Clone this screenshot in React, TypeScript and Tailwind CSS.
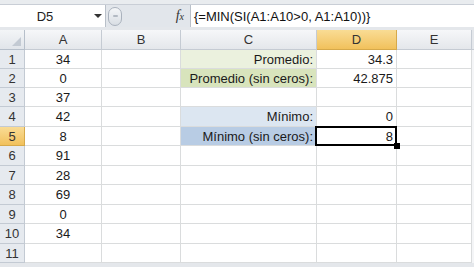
import React from "react";

const rowHeights = ["h-[19px]", "h-[19px]", "h-[19px]", "h-[20px]", "h-[19px]", "h-[20px]", "h-[19px]", "h-[20px]", "h-[19px]", "h-[20px]", "h-[19px]"];
const colA = ["34", "0", "37", "42", "8", "91", "28", "69", "0", "34", ""];

type CCell = { text: string; bg: string };
const colC: Record<number, CCell> = {
  0: { text: "Promedio:", bg: "bg-[#ebf1de]" },
  1: { text: "Promedio (sin ceros):", bg: "bg-[#d8e4bc]" },
  3: { text: "Mínimo:", bg: "bg-[#dce6f1]" },
  4: { text: "Mínimo (sin ceros):", bg: "bg-[#b8cce4]" },
};
const colD: Record<number, string> = { 0: "34.3", 1: "42.875", 3: "0", 4: "8" };

const cell = "border-r border-b border-[#dadcdd] flex items-center px-[3px] text-[#1a1a1a]";

export default function App() {
  return (
    <div
      className="w-[474px] h-[267px] overflow-hidden bg-[#e4e7eb] text-[13px] leading-none"
      style={{ fontFamily: '"Liberation Sans", Arial, sans-serif' }}
    >
      {/* ribbon edge */}
      <div className="h-[5px] bg-[#e9ecef] border-b border-[#c9ced6]" />

      {/* formula bar */}
      <div className="h-[22px] flex bg-[#e2e6eb]">
        <div className="w-[106px] bg-white border-r border-[#b9c0c9] flex items-center relative">
          <span className="w-[90px] text-center text-[#222]">D5</span>
          <span className="absolute right-[3px] top-[9px] w-0 h-0 border-l-[4px] border-r-[4px] border-t-[4px] border-l-transparent border-r-transparent border-t-[#333]" />
        </div>
        <div className="w-[84px] flex items-center pl-[2px]">
          <div className="w-[14px] h-[19px] rounded-full border border-[#aab2bd] bg-gradient-to-b from-[#f4f6f8] to-[#d9dee4] flex items-center justify-center">
            <span className="w-[5px] h-[2px] bg-[#b3bac3] rounded" />
          </div>
          <span
            className="ml-auto mr-[6px] italic text-[14px] text-[#333]"
            style={{ fontFamily: '"Liberation Serif", serif' }}
          >
            f<span className="text-[10px]">x</span>
          </span>
        </div>
        <div className="flex-1 bg-white border-l border-[#b9c0c9] flex items-center pl-[3px] text-[#111]">
          {"{=MIN(SI(A1:A10>0, A1:A10))}"}
        </div>
      </div>

      <div className="h-[3px]" />

      {/* sheet */}
      <div className="grid grid-cols-[25px_77px_79px_136px_80px_75px_1fr]">
        {/* header row */}
        <div className="h-[20px] bg-gradient-to-b from-[#f3f5f7] to-[#e1e5ea] border-r border-b border-[#b6bfca] flex items-end justify-end p-[3px]">
          <svg width="9" height="9" viewBox="0 0 9 9">
            <path d="M9 0 L9 9 L0 9 Z" fill="#c3cad3" />
          </svg>
        </div>
        {["A", "B", "C"].map((c) => (
          <div key={c} className="h-[20px] bg-gradient-to-b from-[#f6f7f9] to-[#e4e7eb] border-r border-b border-[#c5cbd3] flex items-center justify-center text-[#333]">
            {c}
          </div>
        ))}
        <div className="h-[20px] bg-gradient-to-b from-[#f9dc94] to-[#f1c15b] border-r border-b border-[#d6a94a] flex items-center justify-center text-[#333]">
          D
        </div>
        <div className="h-[20px] bg-gradient-to-b from-[#f6f7f9] to-[#e4e7eb] border-r border-b border-[#c5cbd3] flex items-center justify-center text-[#333]">
          E
        </div>
        <div className="h-[20px] bg-[#e4e7eb] border-b border-[#c5cbd3]" />

        {rowHeights.map((h, i) => (
          <React.Fragment key={i}>
            <div
              className={`${h} border-r border-b flex items-center justify-center text-[#333] ${
                i === 4
                  ? "bg-gradient-to-b from-[#f9dc94] to-[#f1c15b] border-[#d6a94a]"
                  : "bg-[#e6eaef] border-[#c3cad3]"
              }`}
            >
              {i + 1}
            </div>
            <div className={`${h} ${cell} bg-white justify-center`}>{colA[i]}</div>
            <div className={`${h} ${cell} bg-white`} />
            <div className={`${h} ${cell} justify-end ${colC[i] ? colC[i].bg : "bg-white"}`}>
              {colC[i]?.text}
            </div>
            <div className={`${h} ${cell} bg-white justify-end relative`}>
              {colD[i]}
              {i === 4 && (
                <>
                  <span className="absolute z-10 -left-[2px] -top-[1px] right-[-1px] bottom-[-1px] border-2 border-black" />
                  <span className="absolute z-20 right-[-4px] bottom-[-4px] w-[6px] h-[6px] bg-black" />
                </>
              )}
            </div>
            <div className={`${h} ${cell} bg-white`} />
            <div className={`${h} bg-[#f4f5f7]`} />
          </React.Fragment>
        ))}
      </div>
    </div>
  );
}
